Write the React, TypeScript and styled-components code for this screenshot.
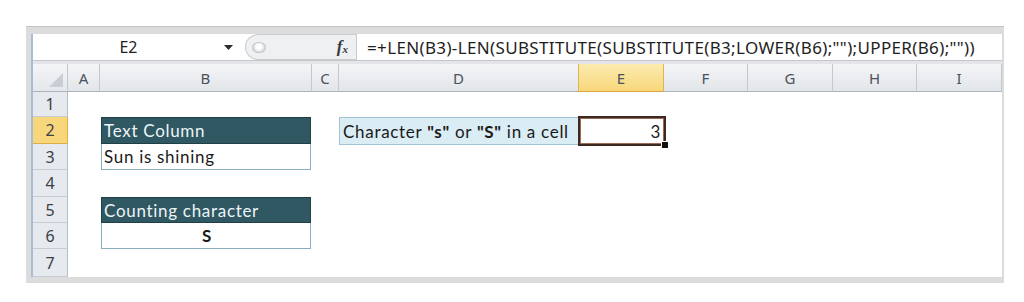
import styled, { createGlobalStyle } from 'styled-components';

const GlobalStyle = createGlobalStyle`
  html, body {
    margin: 0;
    padding: 0;
    background: #fff;
  }
  body {
    font-family: "Noto Sans", "DejaVu Sans", sans-serif;
  }
`;

const COLUMNS = [
  { name: 'A', width: 32 },
  { name: 'B', width: 212 },
  { name: 'C', width: 27 },
  { name: 'D', width: 240 },
  { name: 'E', width: 85 },
  { name: 'F', width: 84 },
  { name: 'G', width: 85 },
  { name: 'H', width: 84 },
  { name: 'I', width: 85 },
];

const ROW_HEIGHTS = [25, 27, 26, 27, 26, 26, 28];
const ACTIVE_COL = 'E';
const ACTIVE_ROW = 2;

const FORMULA = '=+LEN(B3)-LEN(SUBSTITUTE(SUBSTITUTE(B3;LOWER(B6);"");UPPER(B6);""))';

export default function App() {
  return (
    <Page>
      <GlobalStyle />
      <Frame>
        <Sheet>
          <FormulaBar>
            <NameBox>
              <NameText>E2</NameText>
              <DropArrow width="9" height="5" viewBox="0 0 9 5">
                <path d="M0 0h9L4.5 5z" fill="#2b2b2b" />
              </DropArrow>
            </NameBox>
            <Splitter>
              <Knob />
              <Fx>
                f<sub>x</sub>
              </Fx>
            </Splitter>
            <FormulaInput>{FORMULA}</FormulaInput>
          </FormulaBar>
          <BarGap />
          <Grid>
            <Corner>
              <svg width="14" height="14" viewBox="0 0 14 14">
                <path d="M14 0v14H0z" fill="#c9ced5" />
              </svg>
            </Corner>
            {COLUMNS.map((c) => (
              <ColHeader key={c.name} $active={c.name === ACTIVE_COL}>
                {c.name}
              </ColHeader>
            ))}
            {ROW_HEIGHTS.map((_, i) => (
              <RowHeader key={i} $row={i + 2} $active={i + 1 === ACTIVE_ROW}>
                {i + 1}
              </RowHeader>
            ))}

            <TitleCell $col={3} $row={3}>Text Column</TitleCell>
            <BoxCell $col={3} $row={4}>Sun is shining</BoxCell>

            <TitleCell $col={3} $row={6}>Counting character</TitleCell>
            <BoxCell $col={3} $row={7} $center>
              <b>S</b>
            </BoxCell>

            <LabelCell $col={5} $row={3}>
              <span>
                Character <b>"s"</b> or <b>"S"</b> in a cell
              </span>
            </LabelCell>
            <ActiveCell $col={6} $row={3}>
              3
              <FillHandle />
            </ActiveCell>
          </Grid>
        </Sheet>
      </Frame>
    </Page>
  );
}

const Page = styled.div`
  padding: 26px 0 0 26px;
`;

const Frame = styled.div`
  box-sizing: border-box;
  width: 978px;
  background: #dcdcdc;
  border-top: 1px solid #c4c4c4;
  padding: 7px 2px 6px 5px;
`;

const Sheet = styled.div`
  background: #fff;
  border-left: 2px solid #a9bcd6;
`;

const FormulaBar = styled.div`
  display: flex;
  height: 26px;
  background: #fff;
`;

const NameBox = styled.div`
  width: 212px;
  display: flex;
  align-items: center;
`;

const NameText = styled.span`
  flex: 1;
  text-align: center;
  font-size: 16px;
  color: #222;
`;

const DropArrow = styled.svg`
  margin-right: 12px;
`;

const Splitter = styled.div`
  box-sizing: border-box;
  width: 111px;
  display: flex;
  align-items: center;
  justify-content: space-between;
  background: #eef0f2;
  border: 1px solid #c9cbce;
  border-right: none;
  border-radius: 13px 0 0 13px;
  padding: 0 8px 0 6px;
`;

const Knob = styled.span`
  width: 12px;
  height: 9px;
  border-radius: 50%;
  background: radial-gradient(circle at 50% 40%, #fff 30%, #cfd2d6 80%);
  border: 1px solid #c3c6ca;
`;

const Fx = styled.span`
  font-family: "Liberation Serif", "DejaVu Serif", serif;
  font-style: italic;
  font-weight: bold;
  font-size: 17px;
  color: #3a3a3a;
  sub {
    font-size: 11px;
    vertical-align: -1px;
  }
`;

const FormulaInput = styled.div`
  flex: 1;
  display: flex;
  align-items: center;
  border-left: 1px solid #c9cbce;
  padding-left: 10px;
  font-size: 17px;
  letter-spacing: 0.35px;
  color: #1e1e1e;
  white-space: nowrap;
  overflow: hidden;
`;

const BarGap = styled.div`
  box-sizing: border-box;
  height: 4px;
  background: #e3e5e8;
  border-top: 1px solid #c4c6ca;
`;

const Grid = styled.div`
  display: grid;
  grid-template-columns: 35px ${COLUMNS.map((c) => `${c.width}px`).join(' ')};
  grid-template-rows: 28px ${ROW_HEIGHTS.map((h) => `${h}px`).join(' ')};
  background: #fff;
`;

const headerBase = `
  box-sizing: border-box;
  display: flex;
  align-items: center;
  justify-content: center;
  font-size: 15px;
  color: #4a525d;
`;

const Corner = styled.div`
  ${headerBase}
  justify-content: flex-end;
  align-items: flex-end;
  padding: 0 4px 4px 0;
  background: linear-gradient(#f4f5f7, #e4e7eb);
  border-right: 1px solid #c3c8cf;
  border-bottom: 1px solid #aeb4bc;
`;

const ColHeader = styled.div<{ $active: boolean }>`
  ${headerBase}
  background: ${({ $active }) =>
    $active ? 'linear-gradient(#fcebb0, #f7d77a)' : 'linear-gradient(#f4f5f7, #e2e5e9)'};
  border-right: 1px solid ${({ $active }) => ($active ? '#e2b451' : '#c3c8cf')};
  border-bottom: 1px solid ${({ $active }) => ($active ? '#dea640' : '#aeb4bc')};
  ${({ $active }) => ($active ? 'border-left: 1px solid #e2b451; margin-left: -1px;' : '')}
`;

const RowHeader = styled.div<{ $row: number; $active: boolean }>`
  ${headerBase}
  grid-column: 1;
  grid-row: ${({ $row }) => $row};
  font-size: 16px;
  background: ${({ $active }) => ($active ? '#f8d77c' : '#e6e9ee')};
  border-right: 1px solid ${({ $active }) => ($active ? '#e0ad45' : '#b5bbc3')};
  border-bottom: 1px solid ${({ $active }) => ($active ? '#e0ad45' : '#c6ccd3')};
  color: #3b4048;
`;

const Placed = styled.div<{ $col: number; $row: number }>`
  box-sizing: border-box;
  grid-column: ${({ $col }) => $col};
  grid-row: ${({ $row }) => $row};
  display: flex;
  align-items: center;
  font-family: Lato, "Open Sans", sans-serif;
  font-size: 17px;
  letter-spacing: 0.7px;
  color: #1a1a1a;
  white-space: nowrap;
`;

const TitleCell = styled(Placed)`
  margin: 0 1px;
  padding-left: 2px;
  background: #2f5863;
  border: 1px solid #213f47;
  color: #eef4f5;
`;

const BoxCell = styled(Placed)<{ $center?: boolean }>`
  margin: 0 1px;
  padding-left: 2px;
  justify-content: ${({ $center }) => ($center ? 'center' : 'flex-start')};
  border: 1px solid #88afbf;
  border-top: none;
`;

const LabelCell = styled(Placed)`
  margin: 0 0 -1px;
  padding-left: 3px;
  background: #daecf4;
  border: 1px solid #a0c4d5;
`;

const ActiveCell = styled(Placed)`
  position: relative;
  margin: -1px -2px -2px -1px;
  justify-content: flex-end;
  padding-right: 3px;
  border: 2px solid #3d2920;
  box-shadow: inset 0 0 0 1px #9c6b58;
`;

const FillHandle = styled.span`
  position: absolute;
  right: -5px;
  bottom: -5px;
  width: 6px;
  height: 6px;
  background: #111;
  border: 1px solid #fff;
`;
